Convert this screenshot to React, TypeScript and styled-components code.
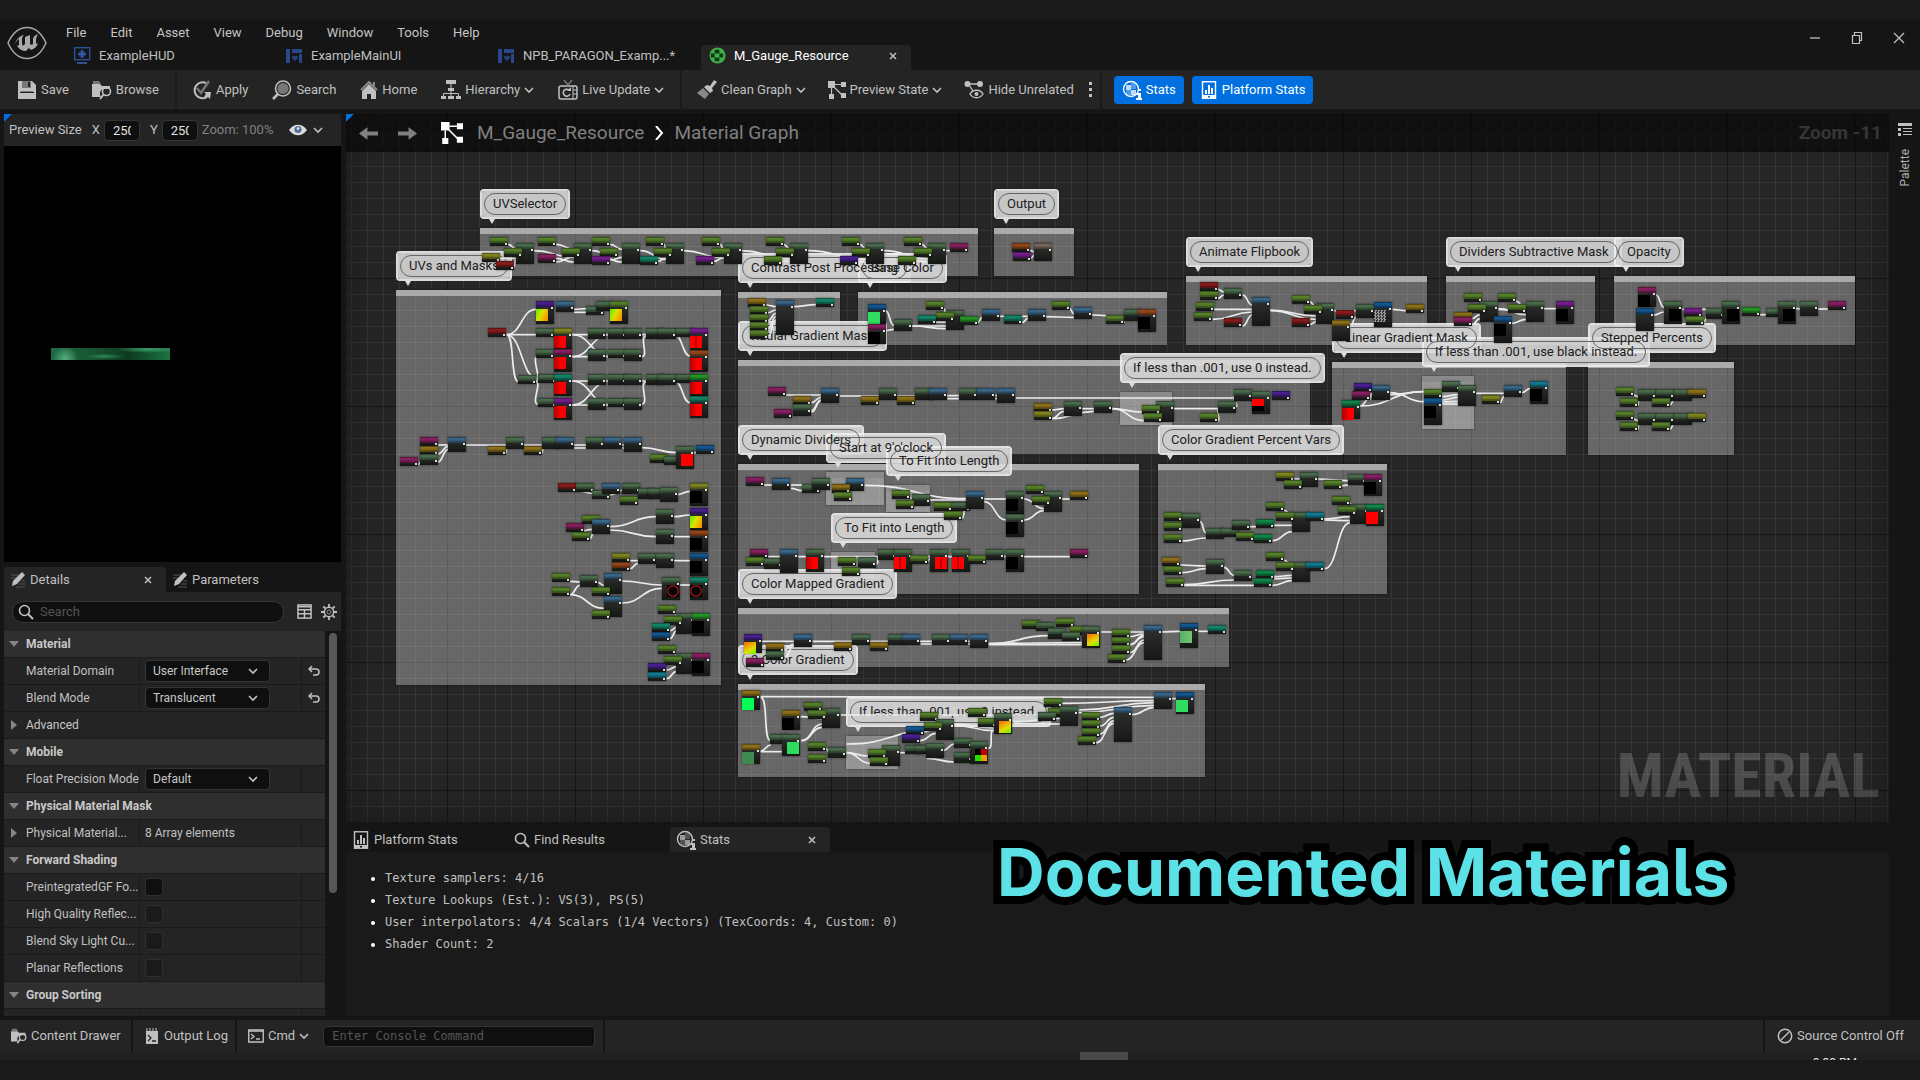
import React from "react";
import styled, { createGlobalStyle, css } from "styled-components";

const GlobalStyle = createGlobalStyle`
  * { box-sizing: border-box; }
  body { margin: 0; background: #151515; }
  body, button, input, select { font-family: Roboto, "Liberation Sans", sans-serif; }
  button, input, select { margin: 0; }
`;

/* ---------- shell ---------- */

const Shell = styled.div`
  display: flex;
  flex-direction: column;
  height: 100vh;
  min-height: 800px;
  background: #151515;
  color: #c0c0c0;
  font-size: 13px;
  line-height: 16px;
  overflow: hidden;
`;

const EdgeStrip = styled.div`
  height: 20px;
  flex: none;
  background: #1a1a1a;
`;

const Header = styled.header`
  display: flex;
  flex: none;
  height: 50px;
  padding-left: 6px;
`;

const LogoBox = styled.div`
  display: flex;
  align-items: center;
  width: 59px;
  padding-bottom: 4px;
`;

const HeaderRows = styled.div`
  display: flex;
  flex-direction: column;
  flex: 1;
`;

const MenuBar = styled.nav`
  display: flex;
  align-items: center;
  height: 25px;
  padding-left: 1px;
  gap: 24px;
`;

const MenuButton = styled.button`
  padding: 0;
  border: 0;
  background: none;
  color: #c4c4c4;
  font-size: 13px;
  line-height: 16px;
`;

const AssetTabs = styled.div`
  display: flex;
  height: 25px;
`;

const AssetTab = styled.button<{ $active?: boolean }>`
  display: flex;
  align-items: center;
  width: 210px;
  margin-right: 2px;
  padding: 0 14px 4px 8px;
  gap: 8px;
  border: 0;
  border-radius: 4px 4px 0 0;
  background: ${(p) => (p.$active ? "#242424" : "transparent")};
  color: ${(p) => (p.$active ? "#ffffff" : "#c0c0c0")};
  font-size: 13px;
  line-height: 16px;
  text-align: left;
  white-space: nowrap;
`;

const TabLabel = styled.span`
  flex: 1;
`;

const WindowButtons = styled.div`
  display: flex;
  align-items: flex-start;
  gap: 26px;
  padding: 10px 13px 0 0;
`;

const IconButton = styled.button`
  display: flex;
  align-items: center;
  justify-content: center;
  padding: 0;
  border: 0;
  background: none;
  color: #c0c0c0;
`;

/* ---------- toolbar ---------- */

const Toolbar = styled.div`
  display: flex;
  align-items: center;
  flex: none;
  height: 40px;
  margin-bottom: 4px;
  padding-left: 6px;
  background: #242424;
  border-bottom: 1px solid #1a1a1a;
`;

const ToolGroup = styled.div<{ $gap?: number }>`
  display: flex;
  align-items: center;
  gap: ${(p) => p.$gap ?? 0}px;
`;

const ToolButton = styled.button`
  display: flex;
  align-items: center;
  height: 28px;
  padding: 0 11px;
  gap: 4px;
  border: 0;
  background: none;
  color: #c0c0c0;
  font-size: 13px;
  line-height: 16px;
  white-space: nowrap;
`;

const ToggleButton = styled(ToolButton)`
  padding: 0 8px;
  border-radius: 4px;
  background: #0070e0;
  color: #ffffff;
`;

const ToolDivider = styled.div`
  width: 2px;
  height: 39px;
  margin: 0 4px 0 5px;
  background: #1a1a1a;
`;

/* ---------- body columns ---------- */

const Workspace = styled.main`
  display: flex;
  flex: 1;
  min-height: 0;
  padding-left: 4px;
  margin-bottom: 4px;
`;

const LeftColumn = styled.section`
  display: flex;
  flex-direction: column;
  width: 337px;
  margin-right: 5px;
`;

const CenterColumn = styled.section`
  display: flex;
  flex-direction: column;
  flex: 1;
  min-width: 0;
`;

const PaletteRail = styled.aside`
  display: flex;
  flex-direction: column;
  align-items: center;
  width: 31px;
  padding-top: 9px;
  gap: 12px;
`;

const RailLabel = styled.button`
  padding: 0;
  border: 0;
  background: none;
  color: #b0b0b0;
  font-size: 12px;
  line-height: 16px;
  writing-mode: vertical-rl;
  transform: rotate(180deg);
`;

const blueCorner = css`
  background-image: linear-gradient(135deg, #0070e0 5px, transparent 6px);
  background-repeat: no-repeat;
`;

const PreviewBar = styled.div`
  display: flex;
  align-items: center;
  flex: none;
  height: 32px;
  padding: 0 18px 0 5px;
  gap: 6px;
  background-color: #242424;
  ${blueCorner}
`;

const SizeField = styled.label`
  display: flex;
  align-items: center;
  gap: 4px;
  padding-left: 4px;
`;

const SizeInput = styled.input`
  width: 36px;
  height: 21px;
  padding: 0 8px;
  border: 1px solid #343434;
  border-radius: 4px;
  background: #0f0f0f;
  color: #e0e0e0;
  font-size: 13px;
`;

const ZoomNote = styled.span`
  flex: 1;
  margin-left: -2px;
  color: #808080;
`;

const PreviewView = styled.div`
  display: flex;
  align-items: center;
  flex: 1;
  padding-left: 47px;
  background: #000;
`;

const GaugeBar = styled.div`
  width: 119px;
  height: 12px;
  background:
    radial-gradient(circle at 12% 90%, #57b07e 0, transparent 12%),
    radial-gradient(ellipse at 45% 70%, #2f8a58 0, transparent 22%),
    radial-gradient(ellipse at 82% 10%, #38a066 0, transparent 24%),
    linear-gradient(90deg, #1c6a42, #17502f 40%, #0e3a20 65%, #1c7244);
`;

/* ---------- docked tabs ---------- */

const DockTabs = styled.div`
  display: flex;
  align-items: flex-end;
  flex: none;
  height: 30px;
`;

const DockTab = styled.button<{ $active?: boolean; $width: number }>`
  display: flex;
  align-items: center;
  width: ${(p) => p.$width}px;
  height: 25px;
  padding: 0 14px 0 6px;
  gap: 4px;
  border: 0;
  border-radius: 4px 4px 0 0;
  background: ${(p) => (p.$active ? "#242424" : "transparent")};
  color: #c0c0c0;
  font-size: 13px;
  line-height: 16px;
  text-align: left;
`;

/* ---------- details ---------- */

const DetailsPanel = styled.section`
  display: flex;
  flex-direction: column;
  flex: none;
  height: 454px;
`;

const DetailsSearchRow = styled.div`
  display: flex;
  align-items: center;
  flex: none;
  height: 39px;
  padding: 0 4px 0 8px;
  gap: 9px;
  background: #242424;
`;

const SearchBox = styled.label`
  display: flex;
  align-items: center;
  flex: 1;
  height: 22px;
  margin-right: 4px;
  padding: 0 5px;
  gap: 6px;
  border: 1px solid #343434;
  border-radius: 11px;
  background: #0f0f0f;
`;

const SearchInput = styled.input`
  flex: 1;
  min-width: 0;
  padding: 0;
  border: 0;
  outline: 0;
  background: none;
  color: #c0c0c0;
  font-size: 13px;
  &::placeholder { color: #555; opacity: 1; }
`;

const DetailsScroll = styled.div`
  display: flex;
  flex: 1;
  min-height: 0;
  overflow: hidden;
`;

const PropertyList = styled.div`
  flex: 1;
`;

const ScrollTrack = styled.div`
  width: 16px;
  padding: 2px 4px;
`;

const ScrollThumb = styled.div`
  height: 260px;
  border-radius: 4px;
  background: #575757;
`;

const CategoryRow = styled.button`
  display: flex;
  align-items: center;
  width: 100%;
  height: 27px;
  padding: 0 5px;
  gap: 7px;
  border: 0;
  border-bottom: 1px solid #1a1a1a;
  background: #2f2f2f;
  color: #c8c8c8;
  font-size: 12px;
  font-weight: 700;
  line-height: 16px;
`;

const SubRow = styled(CategoryRow)`
  background: #242424;
  font-weight: 400;
`;

const PropertyRow = styled.div`
  display: grid;
  grid-template-columns: 136px 1fr 23px;
  height: 27px;
  border-bottom: 1px solid #1a1a1a;
  background: #242424;
`;

const PropertyName = styled.label<{ $expandable?: boolean }>`
  display: flex;
  align-items: center;
  gap: 7px;
  padding-left: ${(p) => (p.$expandable ? 5 : 22)}px;
  border-right: 1px solid #1a1a1a;
  font-size: 12px;
  white-space: nowrap;
`;

const PropertyValue = styled.div`
  display: flex;
  align-items: center;
  padding-left: 5px;
  border-right: 1px solid #1a1a1a;
  font-size: 12px;
`;

const ResetCell = styled.div`
  display: flex;
  align-items: center;
  justify-content: center;
`;

const SelectWrap = styled.div`
  display: grid;
  align-items: center;
  width: 125px;
  svg { grid-area: 1 / 1; justify-self: end; margin-right: 12px; pointer-events: none; }
`;

const Select = styled.select`
  grid-area: 1 / 1;
  width: 100%;
  height: 22px;
  padding: 0 7px;
  appearance: none;
  border: 1px solid #343434;
  border-radius: 4px;
  background: #0f0f0f;
  color: #c8c8c8;
  font-size: 12px;
`;

const CheckBox = styled.input`
  width: 18px;
  height: 18px;
  margin: 0;
  appearance: none;
  border: 1px solid #2f2f2f;
  border-radius: 3px;
  background: #0f0f0f;
  &:disabled { background: #1a1a1a; }
`;

/* ---------- graph ---------- */

const GraphView = styled.div`
  position: relative;
  display: flex;
  flex-direction: column;
  flex: 1;
  min-height: 0;
  overflow: hidden;
  background-color: #262626;
  background-image:
    linear-gradient(90deg, #050505 1px, transparent 1px),
    linear-gradient(#0c0c0c 1px, transparent 1px),
    linear-gradient(90deg, #161616 1px, transparent 1px),
    linear-gradient(#161616 1px, transparent 1px),
    linear-gradient(90deg, #343434 1px, transparent 1px),
    linear-gradient(#343434 1px, transparent 1px);
  background-size: 4096px 4096px, 4096px 4096px, 128px 128px, 128px 128px, 16px 16px, 16px 16px;
  background-position: 869px 0, 0 292px, 101px 0, 0 36px, 5px 0, 0 4px;
`;

const GraphTitle = styled.div`
  position: relative;
  z-index: 6;
  display: flex;
  align-items: center;
  flex: none;
  height: 38px;
  padding: 0 7px 0 13px;
  background-color: rgba(8, 8, 8, 0.68);
  color: #808080;
  font-size: 19px;
  line-height: 24px;
  ${blueCorner}
`;

const NavButtons = styled.div`
  display: flex;
  gap: 20px;
  padding-right: 17px;
  margin-right: 7px;
`;

const Crumbs = styled.div`
  display: flex;
  align-items: center;
  flex: 1;
  gap: 8px;
  padding-left: 14px;
`;

const CrumbLink = styled.a`
  color: inherit;
  text-decoration: none;
`;

const ZoomLabel = styled.span`
  color: #363636;
  font-weight: 700;
`;

const Plane = styled.div`
  position: absolute;
  inset: 0;
`;

const Vignette = styled.div`
  position: absolute;
  inset: 0;
  z-index: 5;
  pointer-events: none;
  box-shadow: inset 0 0 48px rgba(0, 0, 0, 0.4);
`;

const Watermark = styled.div`
  position: absolute;
  right: 9px;
  bottom: 14px;
  color: rgba(255, 255, 255, 0.18);
  font-family: "Roboto Condensed", "Liberation Sans Narrow", Roboto, sans-serif;
  font-size: 62px;
  font-weight: 700;
  line-height: 64px;
`;

const CommentBox = styled.div`
  position: absolute;
  border-top: 6px solid #aaaaaa;
  background: rgba(255, 255, 255, 0.3);
  background-clip: padding-box;
  box-shadow: 0 0 2px rgba(0, 0, 0, 0.5);
`;

const Bubble = styled.div`
  position: absolute;
  height: 30px;
  padding: 4px;
  &::before {
    content: "";
    position: absolute;
    inset: 0;
    z-index: 2;
    border: 2px solid rgba(240, 240, 240, 0.9);
    border-radius: 4px;
    background: rgba(216, 216, 216, 0.9);
    background-clip: padding-box;
  }
  &::after {
    content: "";
    position: absolute;
    left: 9px;
    top: 30px;
    z-index: 2;
    border: 3px solid transparent;
    border-top: 5px solid #dcdcdc;
    border-bottom: 0;
  }
`;

const BubbleText = styled.div`
  position: relative;
  z-index: 3;
  height: 22px;
  padding: 0 8px;
  border: 1px solid #666;
  border-radius: 11px;
  color: #202020;
  font-size: 13px;
  line-height: 20px;
  white-space: nowrap;
`;

const WireLayer = styled.svg`
  position: absolute;
  left: 0;
  top: 0;
  z-index: 3;
  width: 100%;
  height: 100%;
`;

const NodeCard = styled.div`
  position: absolute;
  z-index: 4;
  width: 18px;
  background: linear-gradient(#30332f, #151715);
  box-shadow: 0 0 2px rgba(0, 0, 0, 0.6);
  &::after {
    content: "";
    position: absolute;
    right: 1px;
    top: 6px;
    width: 2px;
    height: 2px;
    background: #ddd;
  }
`;

const NodeHead = styled.div`
  height: 6px;
  border-top: 1px solid rgba(10, 10, 10, 0.35);
  box-shadow: inset 0 -2px 2px rgba(0, 0, 0, 0.4);
`;

const NodePreview = styled.div<{ $inset?: boolean }>`
  width: 12px;
  height: 12px;
  margin-top: 2px;
  margin-left: ${(p) => (p.$inset ? 5 : 0)}px;
`;

/* ---------- results ---------- */

const Results = styled.section`
  position: relative;
  display: flex;
  flex-direction: column;
  flex: none;
  height: 194px;
`;

const ResultsBody = styled.div`
  flex: 1;
  background: #1a1a1a;
`;

const StatList = styled.ul`
  margin: 0;
  padding: 15px 0 0 39px;
  color: #c0c0c0;
  font-family: "DejaVu Sans Mono", monospace;
  font-size: 12px;
  line-height: 22px;
  li::marker { color: #fff; font-size: 12px; }
`;

const Caption = styled.div`
  position: absolute;
  left: 651px;
  top: 10px;
  color: #5ce1e6;
  font-family: Inter, sans-serif;
  font-size: 66px;
  font-weight: 700;
  line-height: 80px;
  white-space: nowrap;
  font-feature-settings: "cv05" 1;
  -webkit-text-stroke: 16px #000;
  paint-order: stroke fill;
`;

/* ---------- status bar ---------- */

const StatusBar = styled.footer`
  display: flex;
  align-items: center;
  flex: none;
  height: 32px;
  background: #242424;
`;

const StatusCell = styled.div<{ $width: number }>`
  display: flex;
  align-items: center;
  width: ${(p) => p.$width}px;
  height: 32px;
  padding: 0 8px 0 11px;
  gap: 14px;
  border-right: 2px solid #151515;
`;

const StatusButton = styled.button`
  display: flex;
  align-items: center;
  padding: 0;
  gap: 4px;
  border: 0;
  background: none;
  color: #c0c0c0;
  font-size: 13px;
  line-height: 16px;
  white-space: nowrap;
`;

const ConsoleInput = styled.input`
  flex: 1;
  min-width: 0;
  height: 21px;
  padding: 0 8px;
  border: 1px solid #343434;
  border-radius: 4px;
  background: #0f0f0f;
  color: #c0c0c0;
  font-family: "DejaVu Sans Mono", monospace;
  font-size: 12px;
  &::placeholder { color: #555; opacity: 1; }
`;

const StatusSpacer = styled.div`
  flex: 1;
`;

const SourceCell = styled.div`
  display: flex;
  align-items: center;
  height: 32px;
  padding: 0 13px 0 12px;
  margin-right: 3px;
  border-left: 2px solid #151515;
`;

const Taskbar = styled.div`
  display: flex;
  justify-content: space-between;
  flex: none;
  height: 8px;
  padding: 0 63px 0 1080px;
  overflow: hidden;
  background: #202020;
`;

const TaskThumb = styled.div`
  width: 48px;
  background: #4a4a4a;
`;

const Clock = styled.span`
  padding-top: 4px;
  color: #e0e0e0;
  font-size: 12px;
  line-height: 14px;
`;

/* ---------- icons ---------- */

const Svg = ({ s = 18, children, vb = "0 0 18 18" }: { s?: number; vb?: string; children: React.ReactNode }) => (
  <svg width={s} height={s} viewBox={vb} fill="none" aria-hidden="true" style={{ flex: "none" }}>
    {children}
  </svg>
);
const C = "#c0c0c0";

const Logo = () => (
  <svg width="42" height="34" viewBox="0 0 42 34" fill="none" aria-hidden="true">
    <path d="M2 17C7 6 14 1.500 21 1.500S35 6 40 17C35 28 28 32.500 21 32.500S7 28 2 17Z" stroke="#a8a8a8" strokeWidth="1.500" />
    <path d="M9 18c1-4 4-8 9-9-2 2-2 3-2 5v4c0 1 1 2 2 1l1-1v-7l5-2v8c0 2 1 2 3 1v-5c0-2 2-4 5-5-1 2-2 4-2 6v4l2-1c-1 4-4 6-7 7l-2-2-3 3c-4 0-7-2-9-5l2-1v-6c-2 1-3 3-4 5Z" fill="#a8a8a8" />
  </svg>
);
const Chevron = () => (
  <Svg s={10} vb="0 0 10 10"><path d="M1 3l4 4 4-4" stroke={C} strokeWidth="1.600" /></Svg>
);
const Cross = () => (
  <Svg s={8} vb="0 0 8 8"><path d="M1 1l6 6M7 1L1 7" stroke={C} strokeWidth="1.500" /></Svg>
);
const SaveIcon = () => (
  <Svg s={20} vb="-1 -1 20 20"><path d="M0 0h14l4 4v14H0Z" fill={C} /><path d="M4 0h9v7H4ZM3 10h12v1H3Z" fill="#777" /><path d="M10 1h2v5h-2ZM2 11h14v1H2Z" fill="#222" /></Svg>
);
const FolderIcon = ({ s = 20 }: { s?: number }) => (
  <Svg s={s} vb="0 0 20 20"><path d="M0 4h8l2 2h8v3h-7c-3 1-4 5-2 8H0Z" fill={C} /><path d="M1 1h6l2 3H1Z" fill="#777" /><circle cx="14.500" cy="11.500" r="4" stroke={C} strokeWidth="1.600" /><path d="M11.500 14.500L8 19" stroke={C} strokeWidth="2" /></Svg>
);
const ApplyIcon = () => (
  <Svg s={20} vb="0 0 20 20"><path d="M14 3A8 8 0 1 0 15 17" stroke={C} strokeWidth="2" /><path d="M12 12l7 0-1 7-2-2-3 1-1-1 2-3Z" fill={C} /><path d="M5 8l4 5 8-12" stroke="#777" strokeWidth="2.400" /></Svg>
);
const LensIcon = () => (
  <Svg s={20} vb="0 0 20 20"><circle cx="11" cy="8.500" r="7.500" stroke={C} strokeWidth="1.600" /><circle cx="11" cy="8.500" r="5.600" fill="#777" /><path d="M6 14l-5 5" stroke={C} strokeWidth="2.600" /></Svg>
);
const SearchIcon = () => (
  <Svg s={16} vb="0 0 16 16"><circle cx="6.500" cy="6.500" r="5" stroke={C} strokeWidth="1.600" /><path d="M10 10l5 5" stroke={C} strokeWidth="2" /></Svg>
);
const HomeIcon = () => (
  <Svg><path d="M1 9L9 1l8 8M14 1v4" stroke="#888" strokeWidth="2" /><path d="M2 10l7-7 7 7v8h-5v-5H7v5H2Z" fill={C} /></Svg>
);
const HierarchyIcon = () => (
  <Svg s={20} vb="0 0 20 20"><path d="M5 0h10v4H5ZM7 8h6v3H7ZM0 16h5v3H0ZM7 16h6v3H7ZM15 16h5v3h-5Z" fill={C} /><path d="M10 4v12M2.500 16v-2.500h15V16" stroke={C} /></Svg>
);
const LiveIcon = () => (
  <Svg s={20} vb="0 0 20 20"><rect x="1" y="6" width="18" height="13" rx="2" stroke={C} strokeWidth="1.500" /><path d="M15 6v13M15 10h4M15 14h4" stroke={C} /><path d="M6 0l4 5 4-5" stroke="#777" strokeWidth="1.500" /><path d="M11 10a3.500 3.500 0 1 0 1 4" stroke={C} strokeWidth="1.600" /><path d="M9 11h4V7Z" fill={C} /></Svg>
);
const BrushIcon = () => (
  <Svg s={20} vb="0 0 20 20"><path d="M17 0l3 2-5 6 1 3-3 2-6-6 3-2 3 1Z" fill={C} /><path d="M6 8l6 6-4 5L0 13Z" fill="#888" /></Svg>
);
const GraphIcon = ({ s = 18, c = C }: { s?: number; c?: string }) => (
  <Svg s={s}><path d="M0 0h7v7H0ZM13 1h5v5h-5ZM13 12h5v5h-5ZM1 13h5v5H1Z" fill={c} /><path d="M7 3.500h6M3.500 7v6M6 6l8 8" stroke={c} strokeWidth="1.200" /></Svg>
);
const HideIcon = () => (
  <Svg s={20} vb="0 0 20 20"><circle cx="3.500" cy="4" r="3" fill={C} /><circle cx="16" cy="4" r="3" fill={C} /><path d="M3 4h13M5 5l4 6" stroke={C} strokeWidth="1.300" /><path d="M6 14c3-5 10-5 13 0-3 5-10 5-13 0Z" stroke={C} strokeWidth="1.400" /><circle cx="12.500" cy="14" r="2" fill={C} /></Svg>
);
const DotsIcon = () => (
  <svg width="10" height="16" viewBox="0 0 10 16" fill="none" aria-hidden="true">
    <path d="M4 0h3v3H4ZM4 6h3v3H4ZM4 12h3v3H4Z" fill={C} />
  </svg>
);
const StatsIcon = ({ c = C }: { c?: string }) => (
  <Svg s={20} vb="0 0 20 20"><circle cx="9" cy="9" r="7.500" stroke={c} strokeWidth="1.400" /><path d="M4 5h5v5H4ZM9 10h5v5H9Z" fill={c} opacity=".75" /><path d="M9 3h5v6H9ZM4 10h5v5H4Z" fill={c} opacity=".3" /><path d="M16 9h3v2h-3ZM15 13h4v5h1v2h-6v-2h2v-3h-1Z" fill={c} /></Svg>
);
const PlatformIcon = ({ c = C }: { c?: string }) => (
  <Svg s={18}><rect x="2.500" y=".75" width="13" height="16.500" stroke={c} strokeWidth="1.400" /><path d="M5 9h2v4H5ZM8 4h2v9H8ZM11 7h2v6h-2ZM3 14h12v3h-5v-2H8v2H3Z" fill={c} /></Svg>
);
const HudIcon = () => (
  <Svg s={18}><rect x="1.700" y=".7" width="15" height="12" stroke="#2f55a5" strokeWidth="1.300" /><circle cx="9" cy="7" r="3.500" fill="#2f55a5" opacity=".6" /><path d="M9 3v8M5 7h8M4 16h10" stroke="#3a63bd" strokeWidth="1.400" /></Svg>
);
const WidgetIcon = () => (
  <Svg s={18}><path d="M1 2h4v14H1ZM7 2h10v4H7ZM14 7h3v9h-3Z" fill="#29488c" /><path d="M7 10c1-2 3-1 3 0 0-1 2-2 3 0 0 2-2 3-3 4-1-1-3-2-3-4Z" fill="#253f78" /></Svg>
);
const MaterialIcon = () => (
  <Svg s={17} vb="0 0 18 18"><circle cx="9" cy="9" r="8.500" fill="#3fae49" /><path d="M6 3h5v4H6ZM2 7h4v4H2ZM11 7h4v4h-4ZM6 11h5v4H6Z" fill="#123a16" /></Svg>
);
const EyeIcon = () => (
  <Svg s={18}><path d="M0 9c5-7 13-7 18 0-5 7-13 7-18 0Z" fill="#dcdcdc" /><circle cx="9" cy="8.500" r="3.600" fill="#56719c" /><circle cx="9" cy="7.500" r="1.200" fill="#eee" /></Svg>
);
const PencilIcon = () => (
  <Svg s={16} vb="0 0 16 16"><path d="M1 3h8M1 6h5M9 12h6M11 9h4M6 15h9" stroke="#555" /><path d="M12 0l3 3-8 9-5 2 1-5Z" fill={C} /></Svg>
);
const TableIcon = () => (
  <Svg s={15} vb="0 0 16 16"><rect x="1" y="1" width="14" height="14" stroke={C} strokeWidth="1.600" /><path d="M1 3h14M1 6h14M1 10.500h14M8 6v9" stroke={C} strokeWidth="1.600" /></Svg>
);
const GearIcon = () => (
  <Svg s={16} vb="0 0 16 16"><circle cx="8" cy="8" r="4.700" stroke={C} strokeWidth="1.500" /><circle cx="8" cy="8" r="2" stroke="#888" /><path d="M8 0v3M8 13v3M0 8h3M13 8h3M2.300 2.300l2 2M11.700 11.700l2 2M2.300 13.700l2-2M11.700 4.300l2-2" stroke={C} strokeWidth="1.800" /></Svg>
);
const ResetIcon = () => (
  <Svg s={12} vb="0 0 12 12"><path d="M4 1L1 4l3 3M1 4h7a3 3 0 0 1 0 6H5" stroke={C} strokeWidth="1.500" /></Svg>
);
const Arrow = ({ open }: { open?: boolean }) => (
  <Svg s={10} vb="0 0 10 10"><path d={open ? "M0 2h10L5 8Z" : "M2 0v10l6-5Z"} fill="#858585" /></Svg>
);
const LogIcon = () => (
  <Svg s={16} vb="0 0 16 16"><path d="M2 3h12v13H2Z" fill={C} /><path d="M3 0v4M6 0v4M9 0v4M12 0v4" stroke={C} /><path d="M4 7l3 3-3 3M8 13h4" stroke="#222" strokeWidth="1.300" /></Svg>
);
const CmdIcon = () => (
  <Svg s={16} vb="0 0 16 16"><path d="M.75 2h14.500v12H.75Z" stroke={C} strokeWidth="1.400" /><path d="M1 3h14M3 6l3 2.500L3 11M8 11h4" stroke={C} strokeWidth="1.300" /></Svg>
);
const OffIcon = () => (
  <Svg s={16} vb="0 0 16 16"><circle cx="8" cy="8" r="6.700" stroke={C} strokeWidth="1.500" /><path d="M4 12l8-8" stroke={C} strokeWidth="1.500" /></Svg>
);
const NavArrow = ({ flip }: { flip?: boolean }) => (
  <Svg s={19} vb="0 0 18 18"><path d={flip ? "M18 9l-8-6v4H0v4h10v4Z" : "M0 9l8-6v4h10v4H8v4Z"} fill="#808080" /></Svg>
);

/* ---------- graph data ---------- */

// The plane's origin within the editor; one plane pixel is three graph units.
const ORIGIN = { x: 346, y: 114 };
const UNIT = 3;

const comments: [string, number, number, number, number][] = [
  ["UVSelector", 480, 228, 498, 48],
  ["UVs and Masks", 396, 290, 325, 395],
  ["Output", 994, 228, 80, 48],
  ["Contrast Post Processing", 738, 292, 102, 52],
  ["Base Color", 858, 292, 309, 53],
  ["Radial Gradient Mask", 738, 360, 572, 94],
  ["If less than .001, use 0 instead.", 1120, 392, 52, 33],
  ["Dynamic Dividers", 738, 464, 401, 130],
  ["Start at 9'o'clock", 826, 472, 58, 33],
  ["To Fit into Length", 886, 485, 44, 27],
  ["To Fit into Length", 831, 552, 44, 27],
  ["Color Mapped Gradient", 738, 608, 491, 59],
  ["3 Color Gradient", 738, 684, 467, 93],
  ["If less than .001, use 0 instead.", 846, 736, 52, 33],
  ["Color Gradient Percent Vars", 1158, 464, 229, 130],
  ["Animate Flipbook", 1186, 276, 241, 69],
  ["Dividers Subtractive Mask", 1446, 276, 149, 69],
  ["Opacity", 1614, 276, 241, 69],
  ["Linear Gradient Mask", 1332, 362, 234, 93],
  ["If less than .001, use black instead.", 1422, 376, 52, 53],
  ["Stepped Percents", 1588, 362, 146, 93],
];
const nested = new Set([6, 8, 9, 10, 13, 19]);

const heads: Record<string, string> = {
  g: "#55802a", G: "#4a6b4c", b: "#3a6688", r: "#861d1d", p: "#86205f", m: "#74208a",
  o: "#8c701a", y: "#7f8420", t: "#138468", v: "#48208f", u: "#15568f", e: "#269426",
  n: "#93461c", c: "#14788f", E: "#128548", w: "#76685c",
};

const previews: Record<string, string> = {
  k: "#000",
  R: "linear-gradient(90deg, #b00000, #ff0000 60%)",
  F: "#ff0000",
  S: "linear-gradient(90deg, #ff0000 42%, #700000 50%, #ff0000 58%)",
  D: "linear-gradient(#ff0000 55%, #000 55%)",
  Y: "linear-gradient(115deg, #50f000, #e0e000 45%, #ff8000)",
  O: "linear-gradient(150deg, #ff6000, #f0a000 30%, #e0e000 60%, #60f000)",
  L: "#2fdc60",
  M: "#00ff55",
  N: "#3f8a50",
  P: "linear-gradient(90deg, #4fb56a, #7ac070)",
  T: "repeating-conic-gradient(#999 0 25%, #333 0 50%) 0 0 / 3px 3px",
  C: "radial-gradient(circle, #000 50%, #d01c1c 58%, #000 74%)",
  Q: "conic-gradient(#c00000 25%, #f0a000 0 50%, #20e000 0 75%, #000 0)",
};

type Cluster = { x: number; y: number; nodes: string; wires: string };

// nodes: "x,y,head,height,preview,inset" — wires: "x1,y1,x2,y2"
const clusters: Cluster[] = [
  {
    x: 380, y: 180,
    nodes: `330,171,g 408,190,G,62 373,204,g 306,220,y 348,244,r 474,171,g 582,190,G,62 546,203,g 474,221,p
      636,171,g 727,190,G,62 660,204,g 636,227,m 798,171,g 858,190,G,62 822,203,g 780,227,t 966,171,g 1032,190,G,62 996,203,g 948,227,m
      468,364,v,68,Y 528,364,b,34 618,377,G 648,364,G,30 690,364,g,68,Y 324,443,r 468,443,G 522,443,y,68,R 468,508,G 522,508,p,68,R
      624,443,G,33 684,443,G,33 732,443,G,33 798,443,G,33 834,443,G,33 888,443,G 930,443,m,68,S
      624,508,G,36 684,508,G 732,508,G,36 930,510,n,66,R 414,586,G 474,581,G 522,581,t,66,R 474,653,G 522,653,m,66,R
      624,581,G,33 684,581,G,33 732,581,G,33 798,581,G,33 834,581,G,33 888,581,G 930,581,e,66,R 624,653,G,36 684,653,G 732,653,G,36 930,647,t,66,R
      120,771,p 120,797,o 120,822,G,34 60,832,p 204,771,b,45 324,797,o 378,771,G,36 432,797,o 486,771,G,36 528,771,b,36 618,771,G,36 672,771,b,36 732,771,b,45
      810,822,g 852,827,G 888,797,G,68,F,1 948,796,u 534,910,r 588,910,G 636,930,G 666,910,b,33 726,910,G,33 720,947,g 774,924,G,33 804,924,G,33 840,922,G,44 930,910,y,68,k
      558,1030,p 606,1006,g 576,1055,g 636,1018,b,44 828,988,G,44 828,1048,G,44 930,984,v,66,Y 930,1050,n,66,k
      696,1120,y 696,1145,n 774,1120,G,33 828,1120,G,44 930,1120,u,68,k 516,1180,g 516,1222,g 600,1186,G,36 672,1180,b,62 636,1222,g 672,1248,b,62 636,1289,g
      846,1192,G,68,C,1 930,1192,t,68,C 834,1276,g 888,1300,G,62 852,1307,g 816,1330,t 816,1355,u 936,1300,e,68,k
      834,1396,g 888,1420,G,62 852,1427,g 804,1450,v 804,1475,c 936,1420,p,68,k`,
    wires: `384,193,408,206 360,235,408,235 400,262,408,240 462,212,582,232 528,193,582,208 528,235,582,246 528,246,582,230
      636,212,727,246 690,240,727,232 690,193,727,208 781,212,858,238 852,193,858,206 834,244,858,234 912,212,1032,234 1020,193,1032,208 1002,244,1032,232
      380,464,468,388 380,464,470,464 380,464,415,605 380,464,470,594 466,603,474,530 466,603,474,672 582,388,618,386 582,397,618,397 576,464,930,464
      576,464,690,530 576,530,690,464 576,530,786,530 786,530,798,468 884,464,930,528 576,603,930,603 576,603,690,675 576,675,690,603 576,675,786,675 786,672,798,606 884,603,930,668
      174,795,204,795 174,822,204,800 174,846,204,808 114,854,122,846 258,795,490,795 376,820,382,800 484,820,492,800 580,795,732,795 580,804,732,804 786,803,890,818 940,818,950,818
      588,932,640,940 690,945,730,930 890,944,930,934 690,1040,828,1010 690,1050,828,1070 882,1010,930,1005 882,1070,930,1070 610,1052,636,1048 630,1076,640,1060
      750,1142,774,1142 750,1166,774,1150 882,1142,930,1142 570,1204,600,1206 570,1244,600,1216 570,1244,672,1285 654,1208,672,1216 726,1203,846,1215 726,1269,846,1225 900,1215,930,1215
      870,1352,890,1342 870,1376,890,1352 886,1298,890,1310 860,1470,890,1460 860,1496,890,1474 886,1418,890,1430`,
  },
  {
    x: 730, y: 180,
    nodes: `108,171,g 180,190,G,62 138,203,g 102,227,g 336,171,g 408,190,G,62 366,203,g 330,227,v 522,171,g 594,190,G,62 552,203,g 504,227,g 660,190,p
      846,190,n 912,190,w,53 848,215,m 54,354,o 60,378,g 60,402,g 60,426,g 60,450,g 138,359,b,104 258,354,t
      414,371,u,60,L 414,431,p,60,k 492,418,G,36 588,363,g 648,390,G,60 617,395,g 563,405,t 690,407,e 757,388,b,36 822,406,t 894,388,b,36 966,363,g 1032,382,b,36 1128,406,g 1182,388,G,36 1224,388,n,68,k
      114,622,p 188,648,o 132,688,p 188,672,G,36 273,625,b,44 392,648,o 447,624,G,36 501,648,o 555,624,G,36 597,624,b,36 687,624,G,36 741,624,b,36 801,624,b,44
      911,670,o 911,694,y 1002,663,G,44 1092,663,G,36 1278,663,G,62 1236,675,g 1242,700,g`,
    wires: `34,212,180,236 160,193,180,208 152,244,180,244 234,212,408,238 390,193,408,208 382,244,408,246 462,212,594,236 576,193,594,208 556,244,594,246 648,212,660,212
      900,212,914,215 902,235,914,225 108,375,138,380 114,398,138,390 114,422,138,400 114,446,138,410 114,468,138,420 190,380,258,374 466,392,492,436 466,452,492,448 546,438,648,438 546,438,648,446
      640,385,652,405 616,426,650,426 742,428,757,412 810,409,894,409 876,428,894,415 948,410,1032,412 1018,385,1032,402 1086,405,1182,410 1180,428,1186,415
      168,645,273,645 244,668,273,652 244,692,273,660 244,696,273,662 330,648,555,648 650,647,801,647 650,656,801,656 858,654,1512,654
      965,690,1002,686 965,716,1002,694 965,716,1092,694 1056,686,1092,686 1146,686,1236,696 1146,686,1242,722 1332,686,1464,686`,
  },
  {
    x: 1100, y: 220,
    nodes: `300,580,g 354,543,G,36 402,507,G,36 456,514,G,68,D 516,513,v 300,186,r 300,214,g 288,245,g 282,276,g 372,205,G,32 372,293,r 456,232,b,86
      576,225,g 648,250,G,62 612,256,g 576,293,r 708,269,r 768,253,G,42 696,299,o,62 822,246,u,75,T 918,251,o
      762,489,v 756,514,p 726,540,E,58,R 816,496,b,44 972,507,g 972,534,u,82,k 1026,484,G,34 1074,496,G,62
      528,755,y 600,755,G,44 552,779,g 672,779,g 744,763,G,32 792,763,p,66,k 498,846,g 576,877,G,60 528,877,g 618,877,c 696,827,g 750,853,G,60 714,858,g 798,852,E,66,F
      192,877,g 192,906,g 192,942,g 245,880,G,44 318,925,G,33 362,925,G 408,936,g 396,901,G,30 468,898,E 462,942,E
      498,996,g 576,1026,G,60 528,1026,g 618,1026,c 186,1012,o 192,1038,g 198,1073,g 318,1018,G,44 402,1051,G,33 468,1050,E 462,1075,E`,
    wires: `352,604,358,565 408,560,404,530 354,208,372,216 354,235,372,225 340,268,456,268 338,298,456,276 428,225,456,255 428,318,456,285
      510,270,648,288 510,272,648,298 628,245,650,265 628,314,650,305 702,272,768,272 750,320,768,292 878,268,918,272
      780,558,816,526 780,558,970,515 870,518,972,545 870,524,972,515 808,538,816,520 1026,530,1074,524 1026,540,1074,532 1026,546,1074,544 1026,552,1074,552 1128,520,1212,520 1200,548,1212,530
      582,777,600,777 654,777,744,782 726,797,744,795 550,870,578,888 672,897,750,890 672,900,750,902 674,1046,750,908 750,850,756,868
      300,905,318,938 247,963,318,954 450,920,468,920 522,916,576,916 518,962,576,935 240,1035,318,1038 245,1058,318,1046 372,1042,402,1066 250,1094,402,1080 250,1096,462,1096 522,1070,576,1066 518,1096,576,1082 522,1076,576,1074 550,1020,578,1038`,
  },
  {
    x: 1420, y: 220,
    nodes: `186,525,y 252,496,b,36 330,484,c,68,k 132,220,g 180,244,G,62 144,251,g 102,275,o 102,292,p 234,220,g 318,244,G,62 264,251,g 222,287,u,82,k 408,244,m,68,k
      654,202,p,60,k 648,263,u,70 732,244,G,68,k,1 792,263,m 798,287,g 858,264,G,33 906,244,G,68,k,1 966,262,e 1038,263,G 1074,244,G,68,k,1 1140,244,G,44 1224,243,p
      588,501,g 600,533,g 654,507,G,36 708,507,G,36 762,507,G,36 696,533,g 804,507,o 588,573,g 600,605,g 654,580,G,36 708,580,G,36 762,580,G,36 696,605,g 804,580,y`,
    wires: `306,518,330,506 155,296,180,284 155,314,180,296 235,266,318,284 235,268,318,276 286,243,318,265 276,310,318,298 372,266,408,266
      708,225,732,262 702,285,732,276 786,268,906,268 852,306,862,290 1020,284,1040,284 1128,266,1140,266 1194,267,1224,267
      640,525,654,530 652,556,658,540 750,555,762,540 640,597,654,602 652,628,658,612 750,628,762,612`,
  },
  {
    x: 730, y: 420,
    nodes: `48,172,p 126,173,b,36 216,192,G 246,173,G,36 348,174,b,40 306,192,o 312,217,g 486,209,g 546,222,G,36 498,240,g 612,245,g 666,245,G 642,274,g 708,214,b,54
      828,214,G,68,k 828,282,G,68,k 888,196,g 942,214,G,62 906,228,g 1020,214,o
      60,388,p 48,412,g 102,414,G,33 150,388,b,72 228,388,G,68,R 324,412,g 384,412,G,33 336,442,g 444,388,G,33 492,388,G,68,S 540,406,g 600,388,G,68,S,1 666,388,G,68,S 714,406,g 768,388,G,33 828,388,G,68,k 1020,388,p
      42,643,v,56,O 108,668,o 108,693,G 48,714,p 192,643,b,40 312,667,o 366,643,G,33 420,667,o 474,643,G,33 516,643,b,33 606,643,G,33 660,643,b,33 720,643,b,42
      876,600,g 918,607,G 978,594,g 954,624,G,33 1020,618,g 996,637,G 1056,619,G,66,O,1 1146,628,g 1146,652,g 1146,676,g 1134,701,g 1242,615,b,105 1350,610,u,75,P 1434,615,t
      36,810,o,60,M 156,869,o,60,k 222,847,g 276,865,G,60 234,870,g 120,943,G,30 156,943,G,66,L,1 36,971,o,60,N 234,966,g 234,1002,g 294,980,G,33
      570,876,g 618,898,G,62 582,906,g 528,918,u 516,942,v 714,865,g 744,895,g 792,880,G,62,O,1 456,976,G,62 414,988,g 420,1012,g 526,976,G 556,976,G 588,970,G,44
      672,953,G,30 672,997,G,33 720,964,G,70,Q,1 942,835,g 954,865,g 990,859,G,60 924,877,G 1056,875,g 1056,899,g 1056,923,g 1044,947,g 1152,862,b,105 1272,815,b,50 1338,815,u,66,L`,
    wires: `102,195,126,195 183,205,216,212 183,195,246,195 405,196,708,236 540,232,548,236 600,240,708,240 695,295,708,266 762,237,828,237 762,245,828,300 882,237,942,266 882,300,942,272 996,237,1020,237
      114,410,1020,410 440,432,446,412 590,426,602,414 96,664,192,664 160,690,192,672 164,712,192,676 248,664,720,664 572,672,720,672 776,674,1056,674 776,672,954,647 776,670,1056,668 1114,636,1242,636
      1200,650,1242,642 1200,674,1242,650 1200,698,1242,660 1188,720,1242,668 1200,674,1242,646 1296,636,1350,634 1404,634,1434,634
      92,830,1272,832 92,832,122,962 92,993,122,975 92,995,156,995 212,890,276,896 214,962,276,912 214,962,276,922 333,885,990,885
      288,986,300,1000 350,998,414,1008 350,998,420,1030 350,972,618,930 570,962,618,940 582,936,618,926 672,912,792,924 672,916,792,932 510,998,526,998 640,992,672,972 590,1015,672,1026 775,985,792,930
      850,910,990,912 850,905,990,895 996,850,1272,842 1046,878,1272,856 1046,870,1272,848 1110,892,1152,880 1110,918,1152,892 1110,942,1152,902 1098,968,1152,910 1206,884,1272,862 1326,836,1338,836`,
  },
];

const split = (s: string) => s.trim().split(/\s+/).map((v) => v.split(","));

const GraphNodes = () => (
  <>
    {clusters.map((cl) =>
      split(cl.nodes).map(([x, y, head, h, preview, inset], i) => (
        <NodeCard
          key={`${cl.x}-${cl.y}-${i}`}
          style={{
            left: Math.round(cl.x - ORIGIN.x + Number(x) / UNIT),
            top: Math.round(cl.y - ORIGIN.y + Number(y) / UNIT),
            height: Math.round(Number(h || 27) / UNIT),
          }}
        >
          <NodeHead style={{ background: heads[head] }} />
          {preview && <NodePreview $inset={!!inset} style={{ background: previews[preview] }} />}
        </NodeCard>
      ))
    )}
  </>
);

const GraphWires = () => (
  <WireLayer aria-hidden="true">
    {clusters.map((cl) => (
      <g
        key={`${cl.x}-${cl.y}`}
        transform={`translate(${cl.x - ORIGIN.x} ${cl.y - ORIGIN.y}) scale(${1 / UNIT})`}
        fill="none"
        stroke="#ececec"
        strokeWidth={5}
      >
        {split(cl.wires).map((w, i) => {
          const [x1, y1, x2, y2] = w.map(Number);
          const k = Math.max(Math.abs(x2 - x1) / 2, Math.min(24, Math.abs(y2 - y1) / 3));
          return <path key={i} d={`M${x1} ${y1}C${x1 + k} ${y1} ${x2 - k} ${y2} ${x2} ${y2}`} />;
        })}
      </g>
    ))}
  </WireLayer>
);

const GraphComments = () => (
  <>
    {comments.map(([label, x, y, w, h], i) => (
      <React.Fragment key={i}>
        <CommentBox
          style={{
            left: x - ORIGIN.x,
            top: y - ORIGIN.y,
            width: w,
            height: h,
            borderTopColor: nested.has(i) ? "#8a8a8a" : undefined,
          }}
        />
        <Bubble style={{ left: x - ORIGIN.x, top: y - ORIGIN.y - 39 }}>
          <BubbleText>{label}</BubbleText>
        </Bubble>
      </React.Fragment>
    ))}
  </>
);

/* ---------- details rows ---------- */

const Category = ({ children }: { children: string }) => (
  <CategoryRow><Arrow open />{children}</CategoryRow>
);

const SelectProperty = ({ id, name, value, changed }: { id: string; name: string; value: string; changed?: boolean }) => (
  <PropertyRow>
    <PropertyName htmlFor={id}>{name}</PropertyName>
    <PropertyValue>
      <SelectWrap>
        <Select id={id} defaultValue={value}><option>{value}</option></Select>
        <Chevron />
      </SelectWrap>
    </PropertyValue>
    <ResetCell>{changed && <IconButton aria-label={`Reset ${name}`}><ResetIcon /></IconButton>}</ResetCell>
  </PropertyRow>
);

const CheckProperty = ({ id, name, disabled }: { id: string; name: string; disabled?: boolean }) => (
  <PropertyRow>
    <PropertyName htmlFor={id}>{name}</PropertyName>
    <PropertyValue><CheckBox type="checkbox" id={id} disabled={disabled} /></PropertyValue>
    <ResetCell />
  </PropertyRow>
);

/* ---------- page ---------- */

export default function App() {
  return (
    <Shell>
      <GlobalStyle />
      <EdgeStrip />
      <Header>
        <LogoBox><Logo /></LogoBox>
        <HeaderRows>
          <MenuBar>
            {["File", "Edit", "Asset", "View", "Debug", "Window", "Tools", "Help"].map((m) => (
              <MenuButton key={m}>{m}</MenuButton>
            ))}
          </MenuBar>
          <AssetTabs>
            <AssetTab><HudIcon />ExampleHUD</AssetTab>
            <AssetTab><WidgetIcon />ExampleMainUI</AssetTab>
            <AssetTab><WidgetIcon />NPB_PARAGON_Examp...*</AssetTab>
            <AssetTab $active><MaterialIcon /><TabLabel>M_Gauge_Resource</TabLabel><Cross /></AssetTab>
          </AssetTabs>
        </HeaderRows>
        <WindowButtons>
          <IconButton aria-label="Minimize"><Svg s={16} vb="0 0 16 16"><path d="M3 8h10" stroke={C} strokeWidth="1.300" /></Svg></IconButton>
          <IconButton aria-label="Restore"><Svg s={16} vb="0 0 16 16"><path d="M3.500 5.500h7v8h-7ZM5.500 5v-2.500h7v8h-2" stroke={C} strokeWidth="1.200" /></Svg></IconButton>
          <IconButton aria-label="Close"><Svg s={16} vb="0 0 16 16"><path d="M3 3l10 10M13 3L3 13" stroke={C} strokeWidth="1.300" /></Svg></IconButton>
        </WindowButtons>
      </Header>

      <Toolbar>
        <ToolGroup $gap={1}>
          <ToolButton><SaveIcon />Save</ToolButton>
          <ToolButton><FolderIcon />Browse</ToolButton>
        </ToolGroup>
        <ToolDivider />
        <ToolGroup $gap={2}>
          <ToolButton><ApplyIcon />Apply</ToolButton>
          <ToolButton><LensIcon />Search</ToolButton>
          <ToolButton><HomeIcon />Home</ToolButton>
          <ToolButton><HierarchyIcon />Hierarchy<Chevron /></ToolButton>
          <ToolButton><LiveIcon />Live Update<Chevron /></ToolButton>
        </ToolGroup>
        <ToolDivider />
        <ToolGroup>
          <ToolButton><BrushIcon />Clean Graph<Chevron /></ToolButton>
          <ToolButton><GraphIcon />Preview State<Chevron /></ToolButton>
          <ToolButton><HideIcon />Hide Unrelated</ToolButton>
          <IconButton aria-label="More options"><DotsIcon /></IconButton>
        </ToolGroup>
        <ToolDivider />
        <ToolGroup $gap={8}>
          <span />
          <ToggleButton aria-pressed="true"><StatsIcon c="#fff" />Stats</ToggleButton>
          <ToggleButton aria-pressed="true"><PlatformIcon c="#fff" />Platform Stats</ToggleButton>
        </ToolGroup>
      </Toolbar>

      <Workspace>
        <LeftColumn>
          <PreviewBar>
            <span>Preview Size</span>
            <SizeField>X<SizeInput defaultValue="250.0" /></SizeField>
            <SizeField>Y<SizeInput defaultValue="250.0" /></SizeField>
            <ZoomNote>Zoom: 100%</ZoomNote>
            <IconButton aria-label="View options"><EyeIcon /></IconButton>
            <Chevron />
          </PreviewBar>
          <PreviewView><GaugeBar /></PreviewView>
          <DetailsPanel>
            <DockTabs>
              <DockTab $active $width={162}><PencilIcon /><TabLabel>Details</TabLabel><Cross /></DockTab>
              <DockTab $width={160}><PencilIcon /><TabLabel>Parameters</TabLabel></DockTab>
            </DockTabs>
            <DetailsSearchRow>
              <SearchBox><SearchIcon /><SearchInput placeholder="Search" aria-label="Search details" /></SearchBox>
              <IconButton aria-label="Property matrix"><TableIcon /></IconButton>
              <IconButton aria-label="Settings"><GearIcon /></IconButton>
            </DetailsSearchRow>
            <DetailsScroll>
              <PropertyList>
                <Category>Material</Category>
                <SelectProperty id="domain" name="Material Domain" value="User Interface" changed />
                <SelectProperty id="blend" name="Blend Mode" value="Translucent" changed />
                <SubRow><Arrow />Advanced</SubRow>
                <Category>Mobile</Category>
                <SelectProperty id="precision" name="Float Precision Mode" value="Default" />
                <Category>Physical Material Mask</Category>
                <PropertyRow>
                  <PropertyName as="div" $expandable><Arrow />Physical Material...</PropertyName>
                  <PropertyValue>8 Array elements</PropertyValue>
                  <ResetCell />
                </PropertyRow>
                <Category>Forward Shading</Category>
                <CheckProperty id="preint" name="PreintegratedGF Fo..." />
                <CheckProperty id="hq" name="High Quality Reflec..." disabled />
                <CheckProperty id="sky" name="Blend Sky Light Cu..." disabled />
                <CheckProperty id="planar" name="Planar Reflections" disabled />
                <Category>Group Sorting</Category>
                <PropertyRow><PropertyName as="div" /><PropertyValue /><ResetCell /></PropertyRow>
              </PropertyList>
              <ScrollTrack><ScrollThumb /></ScrollTrack>
            </DetailsScroll>
          </DetailsPanel>
        </LeftColumn>

        <CenterColumn>
          <GraphView>
            <GraphTitle>
              <NavButtons>
                <IconButton aria-label="Back"><NavArrow /></IconButton>
                <IconButton aria-label="Forward"><NavArrow flip /></IconButton>
              </NavButtons>
              <GraphIcon s={22} c="#fff" />
              <Crumbs>
                <CrumbLink href="#root">M_Gauge_Resource</CrumbLink>
                <Svg s={14} vb="0 0 14 14"><path d="M4 0l6 7-6 7" stroke="#fff" strokeWidth="2" /></Svg>
                <span>Material Graph</span>
              </Crumbs>
              <ZoomLabel>Zoom -11</ZoomLabel>
            </GraphTitle>
            <Watermark>MATERIAL</Watermark>
            <Plane>
              <GraphComments />
              <GraphWires />
              <GraphNodes />
            </Plane>
            <Vignette />
          </GraphView>

          <Results>
            <DockTabs>
              <DockTab $width={162}><PlatformIcon /><TabLabel>Platform Stats</TabLabel></DockTab>
              <DockTab $width={162}><SearchIcon /><TabLabel>Find Results</TabLabel></DockTab>
              <DockTab $active $width={160}><StatsIcon /><TabLabel>Stats</TabLabel><Cross /></DockTab>
            </DockTabs>
            <ResultsBody>
              <StatList>
                <li>Texture samplers: 4/16</li>
                <li>Texture Lookups (Est.): VS(3), PS(5)</li>
                <li>User interpolators: 4/4 Scalars (1/4 Vectors) (TexCoords: 4, Custom: 0)</li>
                <li>Shader Count: 2</li>
              </StatList>
            </ResultsBody>
            <Caption>Documented Materials</Caption>
          </Results>
        </CenterColumn>

        <PaletteRail>
          <Svg s={14} vb="0 0 14 14"><path d="M0 0h14v3H0ZM0 5h3v3H0ZM5 5h9v1H5ZM0 10h3v3H0ZM5 8h9v1H5ZM5 11h9v1H5Z" fill={C} /></Svg>
          <RailLabel>Palette</RailLabel>
        </PaletteRail>
      </Workspace>

      <StatusBar>
        <StatusCell $width={133}><StatusButton><FolderIcon s={16} />Content Drawer</StatusButton></StatusCell>
        <StatusCell $width={104}><StatusButton><LogIcon />Output Log</StatusButton></StatusCell>
        <StatusCell $width={368}>
          <StatusButton aria-label="Console mode"><CmdIcon />Cmd<Chevron /></StatusButton>
          <ConsoleInput placeholder="Enter Console Command" aria-label="Console command" />
        </StatusCell>
        <StatusSpacer />
        <SourceCell><StatusButton><OffIcon />Source Control Off</StatusButton></SourceCell>
      </StatusBar>
      <Taskbar><TaskThumb /><Clock>3:38 PM</Clock></Taskbar>
      <EdgeStrip />
    </Shell>
  );
}
